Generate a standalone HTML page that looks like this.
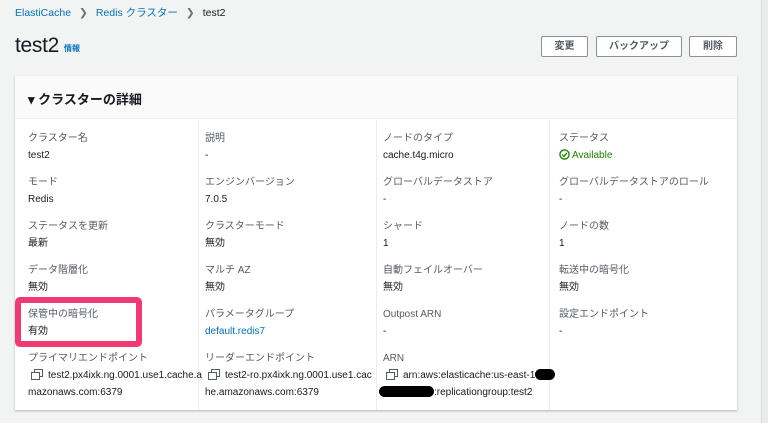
<!DOCTYPE html>
<html><head><meta charset="utf-8"><style>
*{margin:0;padding:0;box-sizing:border-box}
body{width:768px;height:423px;background:#f2f3f3;font-family:"Liberation Sans","Noto Sans CJK JP",sans-serif;position:relative;overflow:hidden;color:#16191f}
.sb{position:absolute;left:761px;top:0;width:7px;height:423px;background:#e9ebed;border-left:1px solid #dcdcdc}
.bc{position:absolute;left:15px;top:5px;font-size:10.5px;color:#0073bb}
.bc span.s{color:#687078;margin:0 8px}
.bc span.c{color:#16191f}
h1{position:absolute;left:15px;top:34px;font-size:21px;font-weight:normal;letter-spacing:-0.3px}
.info{position:absolute;left:64px;top:43px;font-size:8px;color:#0073bb;font-weight:bold}
.btn{position:absolute;top:36px;height:21px;border:1px solid #879196;background:#fff;font-size:10px;font-weight:bold;color:#545b64;text-align:center;line-height:19px;border-radius:2px}
.panel{position:absolute;left:15px;top:76px;width:722px;height:334px;background:#fff;box-shadow:0 1px 2px rgba(0,0,0,.25)}
.ph{height:43px;background:#fafafa;border-bottom:1px solid #eaeded;padding:13px 0 0 13px;font-size:13px;font-weight:bold}
.col{position:absolute;top:44px;bottom:0;border-left:1px solid #eaeded}
.f{position:absolute;font-size:10px;line-height:17px}
.l{color:#545b64}
.v{color:#16191f}
.a{color:#0073bb}
.hl{position:absolute;left:15px;top:297px;width:127px;height:50px;border:6px solid #ef3a73;border-radius:5px}
.cp{display:inline-block;position:relative;width:11px;height:10px;margin:0 6px 0 3px;vertical-align:-1px}
.cp:before{content:"";position:absolute;left:3px;top:0;width:7px;height:6px;border:1.3px solid #545b64}
.cp:after{content:"";position:absolute;left:0;top:3px;width:7px;height:6px;border:1.3px solid #545b64;background:#fff}
.blob{display:inline-block;background:#000;border-radius:7px;height:11px;vertical-align:-2px}
</style></head><body>
<div class="sb"></div>
<div class="bc">ElastiCache<span class="s">❯</span>Redis クラスター<span class="s">❯</span><span class="c">test2</span></div>
<h1>test2</h1><div class="info">情報</div>
<div class="btn" style="left:541px;width:47px">変更</div>
<div class="btn" style="left:596px;width:86px">バックアップ</div>
<div class="btn" style="left:689px;width:48px">削除</div>
<div class="panel">
<div class="ph">▾ クラスターの詳細</div>
<div class="col" style="left:183px"></div>
<div class="col" style="left:361px"></div>
<div class="col" style="left:534px"></div>
</div>
<div class="hl"></div>
<div style="position:absolute;left:21px;top:303px;width:115px;height:38px;background:#fff"></div>

<div class="f" style="left:28px;top:130px"><div class="l">クラスター名</div><div class="v">test2</div></div>
<div class="f" style="left:28px;top:174px"><div class="l">モード</div><div class="v">Redis</div></div>
<div class="f" style="left:28px;top:218px"><div class="l">ステータスを更新</div><div class="v">最新</div></div>
<div class="f" style="left:28px;top:262px"><div class="l">データ階層化</div><div class="v">無効</div></div>
<div class="f" style="left:28px;top:306px"><div class="l">保管中の暗号化</div><div class="v">有効</div></div>
<div class="f" style="left:28px;top:350px"><div class="l">プライマリエンドポイント</div><div class="v"><span class="cp"></span>test2.px4ixk.ng.0001.use1.cache.a</div><div class="v">mazonaws.com:6379</div></div>

<div class="f" style="left:205px;top:130px"><div class="l">説明</div><div class="v">-</div></div>
<div class="f" style="left:205px;top:174px"><div class="l">エンジンバージョン</div><div class="v">7.0.5</div></div>
<div class="f" style="left:205px;top:218px"><div class="l">クラスターモード</div><div class="v">無効</div></div>
<div class="f" style="left:205px;top:262px"><div class="l">マルチ AZ</div><div class="v">無効</div></div>
<div class="f" style="left:205px;top:306px"><div class="l">パラメータグループ</div><div class="a">default.redis7</div></div>
<div class="f" style="left:205px;top:350px"><div class="l">リーダーエンドポイント</div><div class="v"><span class="cp"></span>test2-ro.px4ixk.ng.0001.use1.cac</div><div class="v">he.amazonaws.com:6379</div></div>

<div class="f" style="left:383px;top:130px"><div class="l">ノードのタイプ</div><div class="v">cache.t4g.micro</div></div>
<div class="f" style="left:383px;top:174px"><div class="l">グローバルデータストア</div><div class="v">-</div></div>
<div class="f" style="left:383px;top:218px"><div class="l">シャード</div><div class="v">1</div></div>
<div class="f" style="left:383px;top:262px"><div class="l">自動フェイルオーバー</div><div class="v">無効</div></div>
<div class="f" style="left:383px;top:306px"><div class="l">Outpost ARN</div><div class="v">-</div></div>
<div class="f" style="left:383px;top:350px"><div class="l">ARN</div><div class="v"><span class="cp"></span>arn:aws:elasticache:us-east-1<span class="blob" style="width:20px"></span></div><div class="v"><span class="blob" style="width:55px;margin-left:-4px"></span>:replicationgroup:test2</div></div>

<div class="f" style="left:559px;top:130px"><div class="l">ステータス</div><div style="color:#1d8102"><svg width="11" height="11" viewBox="0 0 12 12" style="vertical-align:-2px;margin-right:2px"><circle cx="6" cy="6" r="5" fill="none" stroke="#1d8102" stroke-width="1.5"/><path d="M3.5 6.2l1.8 1.8 3.3-3.5" fill="none" stroke="#1d8102" stroke-width="1.5"/></svg>Available</div></div>
<div class="f" style="left:559px;top:174px"><div class="l">グローバルデータストアのロール</div><div class="v">-</div></div>
<div class="f" style="left:559px;top:218px"><div class="l">ノードの数</div><div class="v">1</div></div>
<div class="f" style="left:559px;top:262px"><div class="l">転送中の暗号化</div><div class="v">無効</div></div>
<div class="f" style="left:559px;top:306px"><div class="l">設定エンドポイント</div><div class="v">-</div></div>
</body></html>
